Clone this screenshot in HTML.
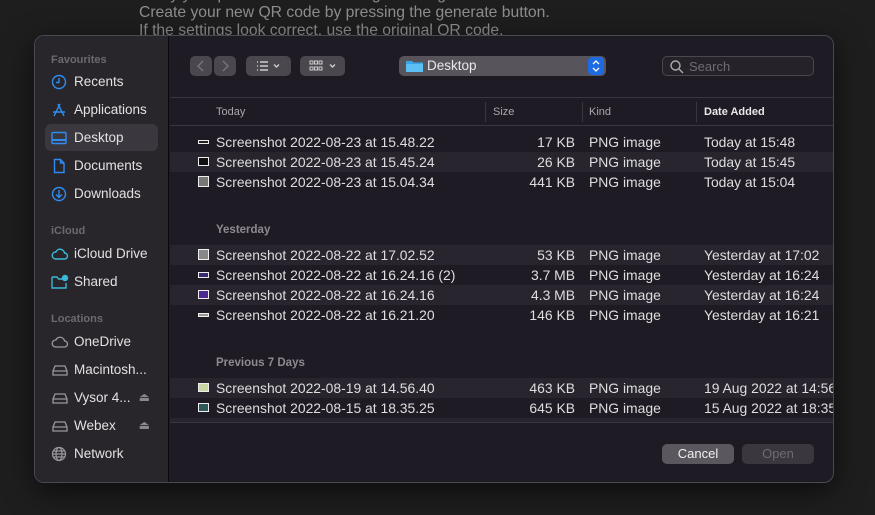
<!DOCTYPE html>
<html><head><meta charset="utf-8"><style>
*{margin:0;padding:0;box-sizing:border-box}
body{width:875px;height:515px;background:#1e1e1e;font-family:"Liberation Sans",sans-serif;position:relative;overflow:hidden;color:#dcdcdc}
.bgt{position:absolute;left:139px;font-size:15.7px;color:#8e8e8e;white-space:nowrap}
.dlg{position:absolute;left:34px;top:35px;width:800px;height:448px;border-radius:10px;background:#1f1b24;border:1px solid #4a4850;overflow:hidden;box-shadow:0 8px 30px rgba(0,0,0,.6)}
.side{position:absolute;left:0;top:0;width:134px;height:100%;background:#28252b;border-right:1px solid #0a0a0a}
.sh{position:absolute;left:16px;font-size:11px;color:#6c6a70;font-weight:bold}
.si{position:absolute;left:10px;width:113px;height:27px;border-radius:6px;font-size:13.5px;color:#e2e2e2;line-height:27px;padding-left:29px}
.si svg{position:absolute;left:6px;top:6px}
.si.sel{background:#3a373e}
.ej{position:absolute;right:8px;top:0;color:#8a888e;font-size:12px}
.btn{position:absolute;height:20px;border-radius:5px;background:#4a474e}
.main{position:absolute;left:135px;top:0;right:0;height:100%}
.hdr{position:absolute;left:0;right:0;top:61px;height:29px;border-top:1px solid #3a3740;border-bottom:1px solid #3a3740;font-size:11px;color:#a9a7ad}
.hdr span{position:absolute;top:8px}
.sep{position:absolute;top:4px;width:1px;height:20px;background:#3a3740}
.row{position:absolute;left:0;right:0;height:20px;font-size:13.9px;line-height:20px;color:#dedede;white-space:nowrap}
.row.l{background:#28252e}
.row .n{position:absolute;left:46px}
.row .s{position:absolute;right:258px}
.row .k{position:absolute;left:419px}
.row .d{position:absolute;left:534px}
.th{position:absolute;left:28px;top:5px;width:11px;height:9px;border:1.5px solid #eee;background:#777}
.grp{position:absolute;left:46px;font-size:11.5px;font-weight:bold;color:#8d8b91}
</style></head><body>
<div class="bgt" style="top:-14px">Verify your phone number before generating</div>
<div class="bgt" style="top:4px">Create your new QR code by pressing the generate button.</div>
<div class="bgt" style="top:22px">If the settings look correct, use the original QR code.</div>
<div class="dlg">
<div class="side">
<div class="sh" style="top:18px">Favourites</div>
<div class="si" style="top:32px"><svg width="16" height="16" viewBox="0 0 16 16" fill="none" stroke="#2f8cf0" stroke-width="1.4"><circle cx="8" cy="8" r="6.5"/><path d="M8 4v4.5H5"/></svg>Recents</div>
<div class="si" style="top:60px"><svg width="16" height="16" viewBox="0 0 16 16" fill="none" stroke="#2f8cf0" stroke-width="1.4"><path d="M3 14L9 2M13 14L7 2M2 10h12"/></svg>Applications</div>
<div class="si sel" style="top:88px"><svg width="16" height="16" viewBox="0 0 16 16" fill="none" stroke="#2f8cf0" stroke-width="1.4"><rect x="1" y="2.5" width="14" height="11" rx="1"/><path d="M1 10h14" stroke-width="2"/></svg>Desktop</div>
<div class="si" style="top:116px"><svg width="16" height="16" viewBox="0 0 16 16" fill="none" stroke="#2f8cf0" stroke-width="1.4"><path d="M3.5 1.5h6l3.5 3.5v9.5h-9.5zM9.5 1.5v3.5h3.5"/></svg>Documents</div>
<div class="si" style="top:144px"><svg width="16" height="16" viewBox="0 0 16 16" fill="none" stroke="#2f8cf0" stroke-width="1.4"><circle cx="8" cy="8" r="6.5"/><path d="M8 4v7M5 8.5l3 3 3-3"/></svg>Downloads</div>
<div class="sh" style="top:189px">iCloud</div>
<div class="si" style="top:204px"><svg width="18" height="16" viewBox="0 0 18 16" fill="none" stroke="#3ab8d8" stroke-width="1.4"><path d="M4.5 13h9a3 3 0 0 0 0-6 4.5 4.5 0 0 0-8.6-1A3.5 3.5 0 0 0 4.5 13z"/></svg>iCloud Drive</div>
<div class="si" style="top:232px"><svg width="18" height="16" viewBox="0 0 18 16" fill="none" stroke="#3ab8d8" stroke-width="1.4"><path d="M1 3h5l1.5 2h5M1 3v11h14V9"/><circle cx="14" cy="4" r="2.5" fill="#3ab8d8"/></svg>Shared</div>
<div class="sh" style="top:277px">Locations</div>
<div class="si" style="top:292px"><svg width="18" height="16" viewBox="0 0 18 16" fill="none" stroke="#9a989e" stroke-width="1.3"><path d="M4.5 13h9a3 3 0 0 0 0-6 4.5 4.5 0 0 0-8.6-1A3.5 3.5 0 0 0 4.5 13z"/></svg>OneDrive</div>
<div class="si" style="top:320px"><svg width="18" height="16" viewBox="0 0 18 16" fill="none" stroke="#9a989e" stroke-width="1.3"><path d="M2 9l2-5h10l2 5v4H2zM2 9h14"/></svg>Macintosh...</div>
<div class="si" style="top:348px"><svg width="18" height="16" viewBox="0 0 18 16" fill="none" stroke="#9a989e" stroke-width="1.3"><path d="M2 9l2-5h10l2 5v4H2zM2 9h14"/></svg>Vysor 4...<span class="ej">⏏</span></div>
<div class="si" style="top:376px"><svg width="18" height="16" viewBox="0 0 18 16" fill="none" stroke="#9a989e" stroke-width="1.3"><path d="M2 9l2-5h10l2 5v4H2zM2 9h14"/></svg>Webex<span class="ej">⏏</span></div>
<div class="si" style="top:404px"><svg width="18" height="16" viewBox="0 0 18 16" fill="none" stroke="#9a989e" stroke-width="1.2"><circle cx="8" cy="8" r="6.5"/><ellipse cx="8" cy="8" rx="3" ry="6.5"/><path d="M1.5 8h13M2.5 5h11M2.5 11h11"/></svg>Network</div>
</div>
<div class="main">
<div class="btn" style="left:20px;top:20px;width:22px"><svg width="22" height="20"><path d="M13 5l-5 5 5 5" fill="none" stroke="#7a787e" stroke-width="1.3"/></svg></div>
<div class="btn" style="left:44px;top:20px;width:22px"><svg width="22" height="20"><path d="M9 5l5 5-5 5" fill="none" stroke="#7a787e" stroke-width="1.3"/></svg></div>
<div class="btn" style="left:76px;top:20px;width:45px"><svg width="45" height="20" fill="none" stroke="#ccc" stroke-width="1.1"><path d="M11 6h1M11 10h1M11 14h1M14 6h8M14 10h8M14 14h8M28 8.5l2.5 2.5 2.5-2.5" stroke-width="1.4"/></svg></div>
<div class="btn" style="left:130px;top:20px;width:45px"><svg width="45" height="20" fill="none" stroke="#ccc" stroke-width="1"><rect x="10" y="5" width="3" height="3"/><rect x="14.5" y="5" width="3" height="3"/><rect x="19" y="5" width="3" height="3"/><rect x="10" y="11" width="3" height="3"/><rect x="14.5" y="11" width="3" height="3"/><rect x="19" y="11" width="3" height="3"/><path d="M30 8.5l2.5 2.5 2.5-2.5" stroke-width="1.4"/></svg></div>
<div class="btn" style="left:229px;top:20px;width:207px;background:#57545b"><svg width="20" height="20" style="position:absolute;left:6px;top:0"><path d="M1 5h6l1.5 1.5H18V16H1z" fill="#3aa6e8"/><rect x="1" y="8" width="17" height="8" fill="#5cc0f5"/></svg><span style="position:absolute;left:28px;top:2px;font-size:13.5px;color:#e8e8e8">Desktop</span><div style="position:absolute;right:2px;top:1px;width:16px;height:18px;border-radius:4px;background:#1e6ae0"><svg width="16" height="18" fill="none" stroke="#fff" stroke-width="1.3"><path d="M5 7l3-3 3 3M5 11l3 3 3-3"/></svg></div></div>
<div style="position:absolute;left:492px;top:20px;width:152px;height:20px;border:1px solid #4a474e;border-radius:5px;background:#25222a"><svg width="16" height="16" style="position:absolute;left:6px;top:2px" fill="none" stroke="#aaa" stroke-width="1.4"><circle cx="6.5" cy="6.5" r="4.5"/><path d="M10 10l4 4"/></svg><span style="position:absolute;left:26px;top:2px;font-size:13px;color:#6e6c72">Search</span></div>
<div class="hdr"><span style="left:46px">Today</span><div class="sep" style="left:315px"></div><span style="left:323px">Size</span><div class="sep" style="left:412px"></div><span style="left:419px">Kind</span><div class="sep" style="left:526px"></div><span style="left:534px;color:#e8e8e8;font-weight:bold">Date Added</span></div>

<div class="row" style="top:96px"><div class="th" style="height:4px;top:8px;background:#222"></div><span class="n">Screenshot 2022-08-23 at 15.48.22</span><span class="s">17 KB</span><span class="k">PNG image</span><span class="d">Today at 15:48</span></div>
<div class="row l" style="top:116px"><div class="th" style="background:#111"></div><span class="n">Screenshot 2022-08-23 at 15.45.24</span><span class="s">26 KB</span><span class="k">PNG image</span><span class="d">Today at 15:45</span></div>
<div class="row" style="top:136px"><div class="th" style="height:11px;top:4px"></div><span class="n">Screenshot 2022-08-23 at 15.04.34</span><span class="s">441 KB</span><span class="k">PNG image</span><span class="d">Today at 15:04</span></div>
<div class="grp" style="top:188px">Yesterday</div>
<div class="row l" style="top:209px"><div class="th" style="height:11px;top:4px;background:#888"></div><span class="n">Screenshot 2022-08-22 at 17.02.52</span><span class="s">53 KB</span><span class="k">PNG image</span><span class="d">Yesterday at 17:02</span></div>
<div class="row" style="top:229px"><div class="th" style="height:6px;top:7px;background:#3a2a70"></div><span class="n">Screenshot 2022-08-22 at 16.24.16 (2)</span><span class="s">3.7 MB</span><span class="k">PNG image</span><span class="d">Yesterday at 16:24</span></div>
<div class="row l" style="top:249px"><div class="th" style="background:#4a2a90"></div><span class="n">Screenshot 2022-08-22 at 16.24.16</span><span class="s">4.3 MB</span><span class="k">PNG image</span><span class="d">Yesterday at 16:24</span></div>
<div class="row" style="top:269px"><div class="th" style="height:4px;top:8px;background:#999"></div><span class="n">Screenshot 2022-08-22 at 16.21.20</span><span class="s">146 KB</span><span class="k">PNG image</span><span class="d">Yesterday at 16:21</span></div>
<div class="grp" style="top:321px">Previous 7 Days</div>
<div class="row l" style="top:342px"><div class="th" style="background:#c8d8a0"></div><span class="n">Screenshot 2022-08-19 at 14.56.40</span><span class="s">463 KB</span><span class="k">PNG image</span><span class="d">19 Aug 2022 at 14:56</span></div>
<div class="row" style="top:362px"><div class="th" style="background:#2e5a5a"></div><span class="n">Screenshot 2022-08-15 at 18.35.25</span><span class="s">645 KB</span><span class="k">PNG image</span><span class="d">15 Aug 2022 at 18:35</span></div>
<div class="row l" style="top:382px;height:4px"></div>
<div style="position:absolute;left:0;right:0;top:386px;height:1px;background:#3a3740"></div>
<div class="btn" style="left:492px;top:408px;width:72px;background:#5a575e;font-size:13px;color:#f0f0f0;text-align:center;line-height:20px">Cancel</div>
<div class="btn" style="left:572px;top:408px;width:72px;background:#3a373e;font-size:13px;color:#6e6c72;text-align:center;line-height:20px">Open</div>
</div>
</div>
</body></html>
